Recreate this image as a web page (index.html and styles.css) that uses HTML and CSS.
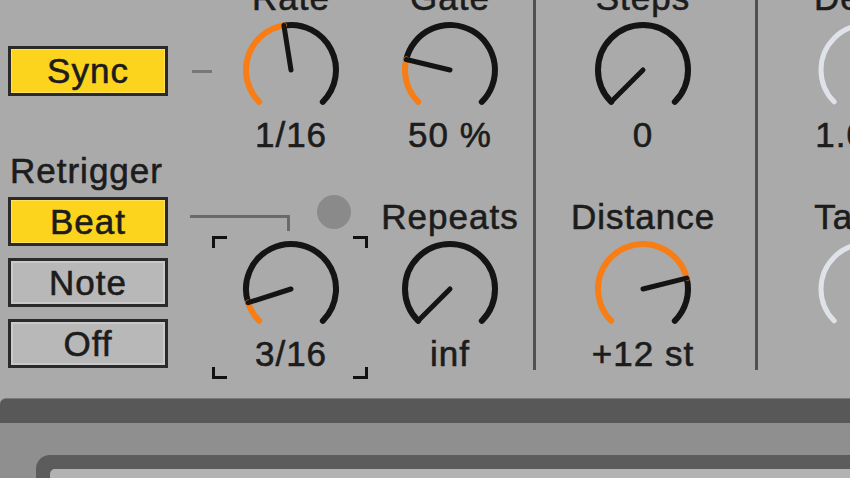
FILE: index.html
```html
<!DOCTYPE html>
<html>
<head>
<meta charset="utf-8">
<link rel="stylesheet" href="styles.css">
</head>
<body>
<div class="device">
  <div class="panel">
    <div class="left">
      <div class="btn on sync">Sync</div>
      <div class="retrig">Retrigger</div>
      <div class="btn on">Beat</div>
      <div class="btn">Note</div>
      <div class="btn">Off</div>
    </div>
    <div class="dash"></div>
    <div class="sec sec1">
      <div class="unit">
        <div class="label">Rate</div>
        <svg class="knob" viewBox="0 0 100 100">
          <path class="arc" d="M42.96 5.55 A45 45 0 0 1 81.82 81.82"/>
          <path class="fill" d="M18.18 81.82 A45 45 0 0 1 42.96 5.55"/>
          <path class="needle" d="M50 50 L42.96 5.55"/>
        </svg>
        <div class="value">1/16</div>
      </div>
      <div class="unit">
        <div class="label">Gate</div>
        <svg class="knob" viewBox="0 0 100 100">
          <path class="arc" d="M6.24 39.5 A45 45 0 1 1 81.82 81.82"/>
          <path class="fill" d="M18.18 81.82 A45 45 0 0 1 6.24 39.5"/>
          <path class="needle" d="M50 50 L6.24 39.5"/>
        </svg>
        <div class="value">50 %</div>
      </div>
      <div class="unit">
        <div class="label"></div>
        <span class="link-line"></span>
        <span class="led"></span>
        <span class="corner tl"></span><span class="corner tr"></span>
        <span class="corner bl"></span><span class="corner br"></span>
        <svg class="knob" viewBox="0 0 100 100">
          <path class="arc" d="M7.13 63.68 A45 45 0 1 1 81.82 81.82"/>
          <path class="fill" d="M18.18 81.82 A45 45 0 0 1 7.13 63.68"/>
          <path class="needle" d="M50 50 L7.13 63.68"/>
        </svg>
        <div class="value">3/16</div>
      </div>
      <div class="unit">
        <div class="label">Repeats</div>
        <svg class="knob" viewBox="0 0 100 100">
          <path class="arc" d="M18.18 81.82 A45 45 0 1 1 81.82 81.82"/>
          <path class="needle" d="M50 50 L18.18 81.82"/>
        </svg>
        <div class="value">inf</div>
      </div>
    </div>
    <div class="divider"></div>
    <div class="sec sec2">
      <div class="unit">
        <div class="label">Steps</div>
        <svg class="knob" viewBox="0 0 100 100">
          <path class="arc" d="M18.18 81.82 A45 45 0 1 1 81.82 81.82"/>
          <path class="needle" d="M50 50 L18.18 81.82"/>
        </svg>
        <div class="value">0</div>
      </div>
      <div class="unit">
        <div class="label">Distance</div>
        <svg class="knob" viewBox="0 0 100 100">
          <path class="arc" d="M93.66 39.11 A45 45 0 0 1 81.82 81.82"/>
          <path class="fill" d="M18.18 81.82 A45 45 0 1 1 93.66 39.11"/>
          <path class="needle" d="M50 50 L93.66 39.11"/>
        </svg>
        <div class="value">+12 st</div>
      </div>
    </div>
    <div class="divider d2"></div>
    <div class="sec sec3">
      <div class="unit">
        <div class="label">Decay</div>
        <svg class="knob" viewBox="0 0 100 100">
          <path class="arc off" d="M18.18 81.82 A45 45 0 1 1 81.82 81.82"/>
        </svg>
        <div class="value">1.00 s</div>
      </div>
      <div class="unit">
        <div class="label">Target</div>
        <svg class="knob" viewBox="0 0 100 100">
          <path class="arc off" d="M18.18 81.82 A45 45 0 1 1 81.82 81.82"/>
        </svg>
        <div class="value">0</div>
      </div>
    </div>
  </div>
  <div class="band"></div>
  <div class="lower">
    <div class="track"><div class="track-inner"></div></div>
  </div>
</div>
</body>
</html>
```

FILE: styles.css
```css
html, body {
  margin: 0;
  padding: 0;
  width: 850px;
  height: 478px;
  overflow: hidden;
  background: #aaaaaa;
}

.device {
  width: 850px;
  height: 478px;
  display: flex;
  flex-direction: column;
  font-family: "Liberation Sans", Arial, sans-serif;
  font-size: 35px;
  letter-spacing: 1px;
  color: #1c1c1c;
  -webkit-text-stroke: 0.6px #1c1c1c;
}

.panel {
  height: 398px;
  flex: none;
  display: flex;
  align-items: flex-start;
  background: #aaaaaa;
  overflow: hidden;
}

.left {
  width: 160px;
  margin-left: 8px;
  padding-top: 46px;
  display: flex;
  flex-direction: column;
  flex: none;
}

.btn {
  box-sizing: border-box;
  height: 49px;
  border: 3px solid #2a2a2a;
  background: #b8b8b8;
  box-shadow: inset 0 0 0 2px #c9c9c9;
  text-align: center;
  line-height: 43px;
  margin-top: 12px;
}

.btn.on {
  background: #fcd41e;
  box-shadow: inset 0 0 0 1px #ffe25a;
}

.btn.sync {
  height: 50px;
  line-height: 44px;
  margin-top: 0;
}

.retrig {
  height: 36px;
  line-height: 36px;
  margin-top: 57px;
  margin-bottom: -4px;
  padding-left: 2px;
}

.dash {
  flex: none;
  width: 20px;
  height: 3px;
  background: #777777;
  margin-left: 24px;
  margin-top: 70px;
}

.sec {
  flex: none;
  display: grid;
  grid-template-rows: 170px 170px;
  row-gap: 49px;
  margin-top: -20px;
}

.sec1 {
  grid-template-columns: 130px 130px;
  column-gap: 29px;
  margin-left: 14px;
}

.sec2 {
  grid-template-columns: 130px;
  margin-left: 42px;
}

.sec3 {
  grid-template-columns: 130px;
  margin-left: 43px;
}

.divider {
  flex: none;
  width: 3px;
  height: 370px;
  background: #505050;
  margin-left: 18px;
}

.divider.d2 {
  margin-left: 47px;
}

.unit {
  position: relative;
  display: flex;
  flex-direction: column;
  align-items: center;
}

.label {
  height: 36px;
  line-height: 36px;
  white-space: nowrap;
}

.knob {
  width: 100px;
  height: 100px;
  margin-top: 4px;
  overflow: visible;
  flex: none;
}

.knob path {
  fill: none;
  stroke-linecap: round;
}

.knob .arc {
  stroke: #141414;
  stroke-width: 6;
}

.knob .arc.off {
  stroke: #dfe3e9;
  stroke-width: 5;
}

.knob .fill {
  stroke: #f77d14;
  stroke-width: 6;
}

.knob .needle {
  stroke: #141414;
  stroke-width: 5;
}

.value {
  height: 30px;
  line-height: 30px;
  white-space: nowrap;
}

.link-line {
  position: absolute;
  left: -36px;
  top: 16px;
  width: 97px;
  height: 13px;
  border-top: 3px solid #6a6a6a;
  border-right: 3px solid #6a6a6a;
}

.led {
  position: absolute;
  left: 91px;
  top: -4px;
  width: 34px;
  height: 34px;
  border-radius: 50%;
  background: #8a8a8a;
}

.corner {
  position: absolute;
  width: 12px;
  height: 9px;
  border: 0 solid #111111;
}

.corner.tl { left: -14px; top: 37px; border-top-width: 3px; border-left-width: 3px; }
.corner.tr { left: 127px; top: 37px; border-top-width: 3px; border-right-width: 3px; }
.corner.bl { left: -14px; top: 168px; border-bottom-width: 3px; border-left-width: 3px; }
.corner.br { left: 127px; top: 168px; border-bottom-width: 3px; border-right-width: 3px; }

.band {
  flex: none;
  height: 25px;
  background: #585858;
  border-top: 1px solid #7a7a7a;
  border-top-left-radius: 6px;
  box-sizing: border-box;
}

.lower {
  flex: 1;
  background: #8f8f8f;
  padding-top: 32px;
  padding-left: 36px;
  overflow: hidden;
}

.track {
  height: 60px;
  background: #5c5c5c;
  border-top-left-radius: 14px;
  padding-top: 14px;
  padding-left: 14px;
}

.track-inner {
  height: 60px;
  background: #b3b3b3;
  border-top-left-radius: 5px;
}
```
